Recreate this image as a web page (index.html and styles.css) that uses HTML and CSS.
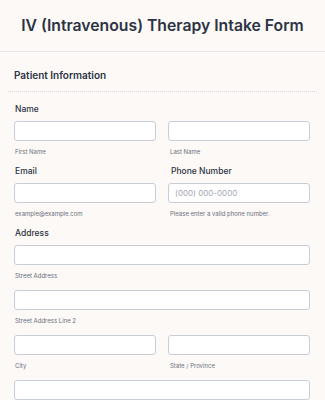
FILE: index.html
```html
<!DOCTYPE html>
<html>
<head>
<meta charset="utf-8">
<link rel="stylesheet" href="styles.css">
</head>
<body>
<header class="header">
  <h1 class="title">IV (Intravenous) Therapy Intake Form</h1>
</header>
<main class="section">
  <h2 class="section-title">Patient Information</h2>
  <div class="fields">
    <div class="field">
      <div class="label">Name</div>
      <div class="row">
        <div class="col">
          <div class="input"></div>
          <div class="sub">First Name</div>
        </div>
        <div class="col">
          <div class="input"></div>
          <div class="sub">Last Name</div>
        </div>
      </div>
    </div>
    <div class="row">
      <div class="col">
        <div class="label">Email</div>
        <div class="input"></div>
        <div class="sub">example@example.com</div>
      </div>
      <div class="col">
        <div class="label">Phone Number</div>
        <div class="input"><span class="placeholder">(000) 000-0000</span></div>
        <div class="sub">Please enter a valid phone number.</div>
      </div>
    </div>
    <div class="field">
      <div class="label">Address</div>
      <div class="stack">
        <div class="col">
          <div class="input"></div>
          <div class="sub">Street Address</div>
        </div>
        <div class="col">
          <div class="input"></div>
          <div class="sub">Street Address Line 2</div>
        </div>
        <div class="row">
          <div class="col">
            <div class="input"></div>
            <div class="sub">City</div>
          </div>
          <div class="col">
            <div class="input"></div>
            <div class="sub">State / Province</div>
          </div>
        </div>
        <div class="col">
          <div class="input"></div>
        </div>
      </div>
    </div>
  </div>
</main>
</body>
</html>
```
FILE: styles.css
```css
* { box-sizing: border-box; }
html, body { margin: 0; padding: 0; }
body {
  background: #fcf9f6;
  font-family: Inter, "Noto Sans", sans-serif;
  color: #2c3345;
  width: 325px;
  height: 400px;
  overflow: hidden;
}
.header {
  height: 52px;
  border-bottom: 1px solid #e7e7e9;
  display: flex;
  align-items: center;
  justify-content: center;
}
.title {
  margin: 0;
  font-size: 15.75px;
  font-weight: 600;
  line-height: 22px;
  color: #2c3345;
  white-space: nowrap;
}
.section {
  padding: 0 8px;
}
.section-title {
  margin: 0;
  padding: 15px 6px 8px;
  font-size: 10px;
  line-height: 16px;
  font-weight: 600;
  border-bottom: 1px dotted #d3d7df;
  color: #2c3345;
}
.fields {
  padding: 11px 7px 0 6px;
  display: flex;
  flex-direction: column;
  gap: 9px;
}
.label {
  font-size: 8.5px;
  line-height: 13px;
  font-weight: 500;
  margin-bottom: 5px;
  padding-left: 1px;
  color: #2c3345;
}
.row {
  display: flex;
  gap: 12px;
}
.row > .col { flex: 1; min-width: 0; }
.row > .col + .col > .label { padding-left: 3px; }
.col { display: flex; flex-direction: column; }
.stack {
  display: flex;
  flex-direction: column;
  gap: 10px;
}
.input {
  height: 20px;
  background: #ffffff;
  border: 1px solid #c8ced9;
  border-radius: 3px;
  display: flex;
  align-items: center;
  padding: 0 6px;
}
.placeholder {
  font-size: 8px;
  color: #a3a7b5;
}
.sub {
  margin-top: 6px;
  padding-left: 1px;
  font-size: 6px;
  line-height: 9px;
  color: #6b7080;
}
.row > .col + .col > .sub { padding-left: 2px; }
```
